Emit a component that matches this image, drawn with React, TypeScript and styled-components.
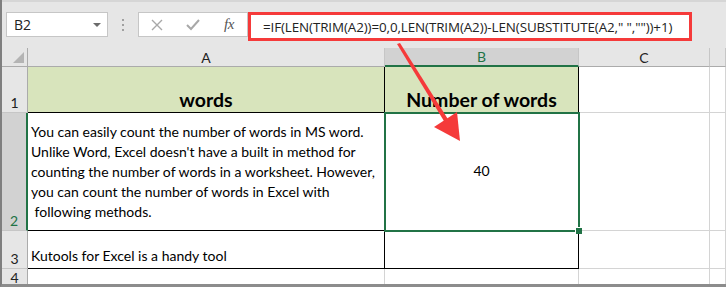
import { createGlobalStyle, styled } from 'styled-components'

const GlobalStyle = createGlobalStyle`
  html, body {
    margin: 0;
    padding: 0;
    background: #fff;
  }
  body {
    font-family: Lato, "Liberation Sans", sans-serif;
  }
`

const GREEN = '#217346'
const CELL_FONT = 'Lato, "Liberation Sans", sans-serif'

const Window = styled.div`
  position: relative;
  width: 726px;
  height: 287px;
  box-sizing: border-box;
  border-left: 2px solid #7f7f7f;
  border-bottom: 3px solid #8c8c8c;
  background: #fff;
  overflow: hidden;
  display: flex;
  flex-direction: column;
`

const Toolbar = styled.div`
  height: 48px;
  flex: none;
  box-sizing: border-box;
  border-top: 2px solid #d6d6d6;
  background: #e6e6e6;
  display: flex;
  align-items: flex-start;
  padding: 10px 0 0 4px;
`

const Box = styled.div<{ $w: number }>`
  width: ${(p) => p.$w}px;
  height: 25px;
  box-sizing: border-box;
  background: #fff;
  border: 1px solid #c6c6c6;
  display: flex;
  align-items: center;
`

const NameText = styled.span`
  flex: 1;
  padding-left: 7px;
  font-family: "Open Sans", "Liberation Sans", sans-serif;
  font-size: 14px;
  color: #222;
`

const Caret = styled.span`
  width: 0;
  height: 0;
  margin-right: 6px;
  border-left: 4px solid transparent;
  border-right: 4px solid transparent;
  border-top: 4px solid #6b6b6b;
`

const Grip = styled.div`
  width: 30px;
  height: 25px;
  display: flex;
  flex-direction: column;
  align-items: center;
  justify-content: center;
  gap: 3px;
  span {
    width: 2px;
    height: 2px;
    background: #a0a0a0;
  }
`

const IconSlot = styled.div`
  flex: 1;
  display: flex;
  justify-content: center;
  align-items: center;
`

const Fx = styled.span`
  font-family: "Liberation Serif", serif;
  font-style: italic;
  font-size: 15px;
  color: #555;
  letter-spacing: -0.5px;
`

const FormulaBox = styled.div`
  width: 444px;
  height: 29px;
  box-sizing: border-box;
  border: 3px solid #f53a3a;
  background: #fff;
  display: flex;
  align-items: center;
  padding-left: 12px;
  font-family: "Open Sans", "Liberation Sans", sans-serif;
  font-size: 13.4px;
  letter-spacing: -0.1px;
  color: #222;
  white-space: pre;
`

const Sheet = styled.div`
  flex: 1;
  display: grid;
  grid-template-columns: 26px 357px 194px 131px 1fr;
  grid-template-rows: 19px 46px 118px 38px 1fr;
  background: #fff;
`

const Corner = styled.div`
  background: #e6e6e6;
  border-right: 1px solid #ababab;
  border-bottom: 1px solid #ababab;
  box-sizing: border-box;
  display: flex;
  justify-content: flex-end;
  align-items: flex-end;
  padding: 0 3px 3px 0;
`

const ColHead = styled.div<{ $sel?: boolean }>`
  box-sizing: border-box;
  background: ${(p) => (p.$sel ? '#d2d2d2' : '#e6e6e6')};
  border-right: 1px solid #c6c6c6;
  border-bottom: ${(p) => (p.$sel ? `2px solid ${GREEN}` : '1px solid #ababab')};
  display: flex;
  justify-content: center;
  align-items: center;
  font-family: ${CELL_FONT};
  font-size: 14px;
  color: ${(p) => (p.$sel ? GREEN : '#222')};
`

const RowHead = styled.div<{ $sel?: boolean }>`
  box-sizing: border-box;
  background: ${(p) => (p.$sel ? '#d2d2d2' : '#e6e6e6')};
  border-right: ${(p) => (p.$sel ? `2px solid ${GREEN}` : '1px solid #ababab')};
  border-bottom: 1px solid #c6c6c6;
  display: flex;
  justify-content: center;
  align-items: flex-end;
  padding-bottom: 1px;
  font-family: ${CELL_FONT};
  font-size: 14px;
  color: ${(p) => (p.$sel ? GREEN : '#222')};
`

const Cell = styled.div<{
  $fill?: string
  $edge?: string
  $align?: 'start' | 'center'
  $valign?: 'center' | 'end'
  $bold?: boolean
}>`
  position: relative;
  box-sizing: border-box;
  background: ${(p) => p.$fill || '#fff'};
  border-right: 1px solid ${(p) => p.$edge || '#d4d4d4'};
  border-bottom: 1px solid ${(p) => p.$edge || '#d4d4d4'};
  display: flex;
  justify-content: ${(p) => (p.$align === 'center' ? 'center' : 'flex-start')};
  align-items: ${(p) => (p.$valign === 'center' ? 'center' : 'flex-end')};
  padding: 0 3px 2px 3px;
  font-family: ${CELL_FONT};
  font-size: ${(p) => (p.$bold ? '19.5px' : '14px')};
  font-weight: ${(p) => (p.$bold ? 700 : 400)};
  line-height: 20px;
  color: #000;
  white-space: pre;
`

const Selected = styled(Cell)`
  outline: 2px solid ${GREEN};
  outline-offset: -1px;
  z-index: 2;
  &::after {
    content: '';
    position: absolute;
    right: -4px;
    bottom: -4px;
    width: 6px;
    height: 6px;
    background: ${GREEN};
    border: 1px solid #fff;
    border-right: none;
    border-bottom: none;
  }
`

const Wrapped = styled.div`
  padding-bottom: 6px;
`

const ArrowLayer = styled.svg`
  position: absolute;
  left: 0;
  top: 0;
  pointer-events: none;
  z-index: 5;
`

const TEXT = `You can easily count the number of words in MS word.
Unlike Word, Excel doesn't have a built in method for
counting the number of words in a worksheet. However,
you can count the number of words in Excel with
 following methods.`

export default function App() {
  return (
    <>
      <GlobalStyle />
      <Window>
        <Toolbar>
          <Box $w={102}>
            <NameText>B2</NameText>
            <Caret />
          </Box>
          <Grip>
            <span />
            <span />
            <span />
          </Grip>
          <Box $w={110}>
            <IconSlot>
              <svg width="12" height="12" viewBox="0 0 12 12">
                <path d="M1 1 L11 11 M11 1 L1 11" stroke="#a8a8a8" strokeWidth="1.4" fill="none" />
              </svg>
            </IconSlot>
            <IconSlot>
              <svg width="14" height="12" viewBox="0 0 14 12">
                <path d="M1 6 L5 10 L13 1" stroke="#a8a8a8" strokeWidth="2" fill="none" />
              </svg>
            </IconSlot>
            <IconSlot>
              <Fx>fx</Fx>
            </IconSlot>
          </Box>
          <FormulaBox>{'=IF(LEN(TRIM(A2))=0,0,LEN(TRIM(A2))-LEN(SUBSTITUTE(A2," ",""))+1)'}</FormulaBox>
        </Toolbar>
        <Sheet>
          <Corner>
            <svg width="11" height="11" viewBox="0 0 11 11">
              <polygon points="11,0 11,11 0,11" fill="#b4b4b4" />
            </svg>
          </Corner>
          <ColHead>A</ColHead>
          <ColHead $sel>B</ColHead>
          <ColHead>C</ColHead>
          <ColHead />

          <RowHead>1</RowHead>
          <Cell $fill="#d8e4bc" $edge="#000" $align="center" $bold>
            words
          </Cell>
          <Cell $fill="#d8e4bc" $edge="#000" $align="center" $bold>
            Number of words
          </Cell>
          <Cell />
          <Cell />

          <RowHead $sel>2</RowHead>
          <Cell $edge="#000">
            <Wrapped>{TEXT}</Wrapped>
          </Cell>
          <Selected $edge="#000" $align="center" $valign="center">
            40
          </Selected>
          <Cell />
          <Cell />

          <RowHead>3</RowHead>
          <Cell $edge="#000">Kutools for Excel is a handy tool</Cell>
          <Cell $edge="#000" />
          <Cell />
          <Cell />

          <RowHead>4</RowHead>
          <Cell />
          <Cell />
          <Cell />
          <Cell />
        </Sheet>
        <ArrowLayer width="726" height="287" viewBox="0 0 726 287">
          <polygon points="395,44 398,43 449,124 445,126" fill="#f53a3a" />
          <polygon points="458,141 432,127 455,112" fill="#f53a3a" />
        </ArrowLayer>
      </Window>
    </>
  )
}
